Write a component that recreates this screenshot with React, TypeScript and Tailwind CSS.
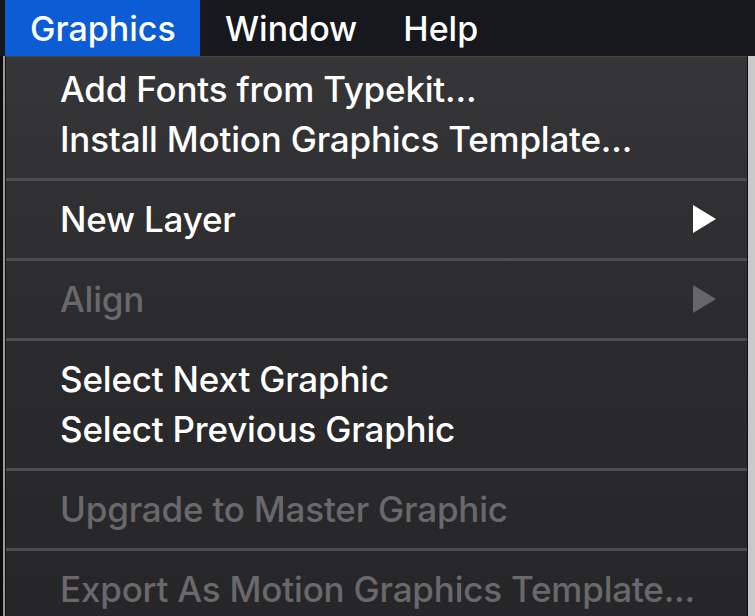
const FONT = "font-['Inter','Liberation_Sans',sans-serif]";

type Item = { label: string; disabled?: boolean; submenu?: boolean };

const groups: Item[][] = [
  [{ label: "Add Fonts from Typekit..." }, { label: "Install Motion Graphics Template..." }],
  [{ label: "New Layer", submenu: true }],
  [{ label: "Align", disabled: true, submenu: true }],
  [{ label: "Select Next Graphic" }, { label: "Select Previous Graphic" }],
  [{ label: "Upgrade to Master Graphic", disabled: true }],
  [{ label: "Export As Motion Graphics Template...", disabled: true }],
];

function Arrow({ disabled }: { disabled?: boolean }) {
  return (
    <svg width="23" height="28" viewBox="0 0 23 28" className="shrink-0">
      <polygon points="0,0 23,14 0,28" fill={disabled ? "#666668" : "#ffffff"} />
    </svg>
  );
}

function Row({ item }: { item: Item }) {
  return (
    <div className="h-[50px] flex items-center justify-between pl-[54px] pr-[31px]">
      <span
        className={
          "text-[35px] leading-none font-medium tracking-[-0.2px] " +
          (item.disabled ? "text-[#69696b]" : "text-white")
        }
      >
        {item.label}
      </span>
      {item.submenu && <Arrow disabled={item.disabled} />}
    </div>
  );
}

export default function App() {
  return (
    <div className={`w-[755px] h-[616px] bg-black overflow-hidden flex flex-col ${FONT}`}>
      {/* menu bar */}
      <div className="h-[56px] shrink-0 bg-[#16181d] flex items-stretch text-white text-[34px] font-medium">
        <div className="ml-[5px] w-[195px] bg-[#0b5cd5] flex items-center pl-[25px]">Graphics</div>
        <div className="flex items-center ml-[25px]">Window</div>
        <div className="flex items-center ml-[46px]">Help</div>
      </div>

      <div className="flex-1 flex">
        <div className="w-[3px] bg-[#0c0c0c]" />
        <div className="w-[2px] bg-[#9a9a9a]" />
        {/* dropdown */}
        <div className="flex-1 border-x border-[#111113] border-t border-t-[#48484a] bg-gradient-to-b from-[#363638] via-[#2b2b2d] to-[#262628] pt-[7px]">
          {groups.map((group, gi) => (
            <div key={gi}>
              {gi > 0 && (
                <div className="h-[30px] flex items-center">
                  <div className="h-[3px] w-full bg-[#4d4d4f]" />
                </div>
              )}
              {group.map((item) => (
                <Row key={item.label} item={item} />
              ))}
            </div>
          ))}
        </div>
        <div className="w-[7px] bg-[#c9c9c9]" />
      </div>
    </div>
  );
}
